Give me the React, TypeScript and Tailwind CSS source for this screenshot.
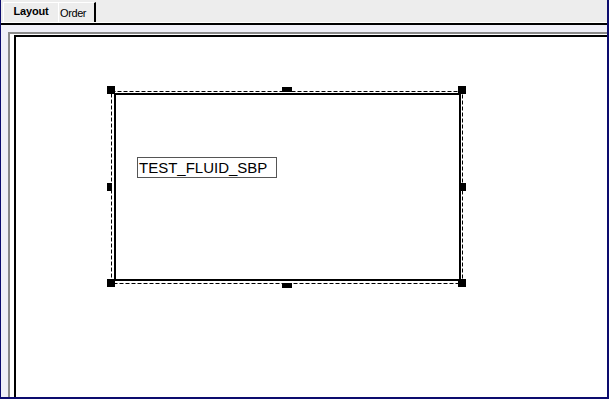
import React from "react";

export default function App() {
  return (
    <div className="w-[609px] h-[399px] overflow-hidden flex flex-col border-l border-r-2 border-b-2 border-[#0c0c6e] bg-[#ededed] font-['Liberation_Sans',Arial,sans-serif] text-black">
      <div className="h-[22px] flex items-end pl-[2px] shrink-0">
        <div className="h-[20px] w-[55px] border-l border-t border-white flex items-center justify-center font-bold text-[11px] tracking-[-0.2px] pb-[2px]">
          Layout
        </div>
        <div className="h-[20px] w-[38px] border-l border-t border-white border-r-2 border-r-black flex items-center pl-[1px] text-[11px] tracking-[-0.4px] pt-[2px]">
          Order
        </div>
      </div>
      <div className="h-px bg-white shrink-0" />
      <div className="h-[2px] bg-black shrink-0" />
      <div className="flex-1 bg-[#f0f0f8] pl-[7px] pt-[7px] flex min-h-0">
        <div className="flex-1 border-l-2 border-t-2 border-[#8a8a8a] pl-[4px] pt-px flex min-h-0 bg-white">
          <div className="flex-1 border-l-2 border-t-2 border-black bg-white relative">
            {/* selection dashed outline */}
            <svg className="absolute left-[95px] top-[54px]" width="352" height="193">
              <rect x="0.5" y="0.5" width="351" height="192" fill="none" stroke="#000" strokeWidth="1" strokeDasharray="4 2" />
            </svg>
            {/* solid rectangle */}
            <div className="absolute left-[98px] top-[56px] w-[347px] h-[188px] border-2 border-black" />
            {/* handles */}
            <div className="absolute left-[91px] top-[49px] w-[8px] h-[8px] bg-black" />
            <div className="absolute left-[442px] top-[49px] w-[8px] h-[8px] bg-black" />
            <div className="absolute left-[91px] top-[242px] w-[8px] h-[8px] bg-black" />
            <div className="absolute left-[442px] top-[242px] w-[8px] h-[8px] bg-black" />
            <div className="absolute left-[266px] top-[50px] w-[10px] h-[5px] bg-black" />
            <div className="absolute left-[266px] top-[246px] w-[10px] h-[5px] bg-black" />
            <div className="absolute left-[91px] top-[146px] w-[5px] h-[8px] bg-black" />
            <div className="absolute left-[445px] top-[146px] w-[5px] h-[8px] bg-black" />
            {/* text field */}
            <div className="absolute left-[121px] top-[120px] w-[140px] h-[21px] border border-[#555] flex items-center pl-[1px] text-[15px] leading-none">
              TEST_FLUID_SBP
            </div>
          </div>
        </div>
      </div>
    </div>
  );
}
